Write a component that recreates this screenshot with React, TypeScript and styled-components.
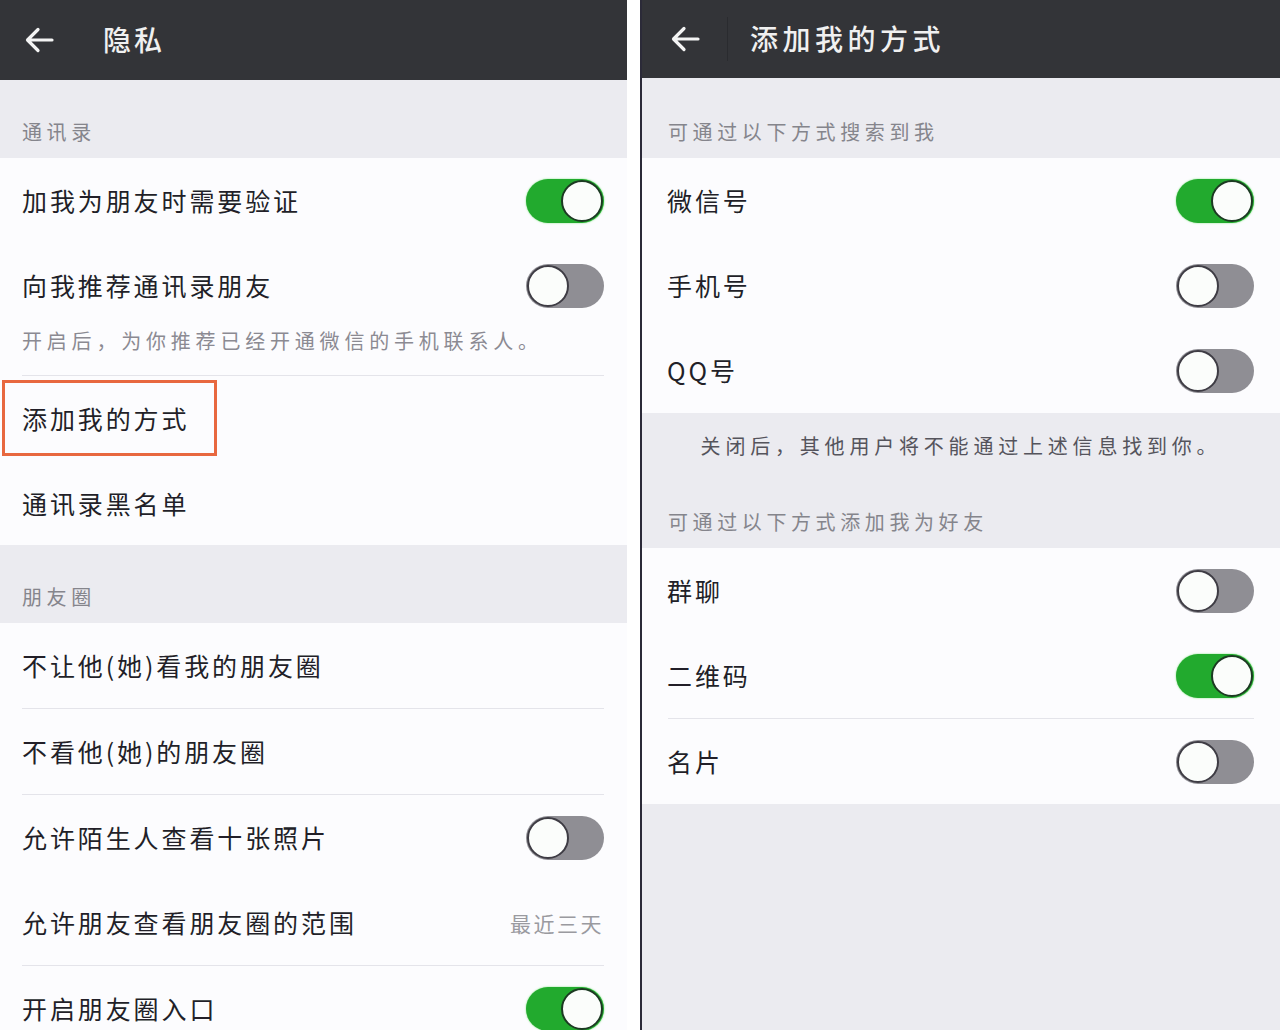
import styled, { createGlobalStyle } from "styled-components";

const GlobalStyle = createGlobalStyle`
  html, body {
    margin: 0;
    padding: 0;
    background: #ffffff;
  }
  body {
    font-family: "Noto Sans CJK SC", "Noto Sans", "Liberation Sans", sans-serif;
    -webkit-font-smoothing: antialiased;
  }
`;

const Page = styled.div`
  display: flex;
  width: 1280px;
  height: 1030px;
  overflow: hidden;
  background: #ffffff;
`;

const Screen = styled.div<{ $width?: number; $edge?: boolean }>`
  display: flex;
  flex-direction: column;
  width: ${(p) => (p.$width ? `${p.$width}px` : "auto")};
  flex: ${(p) => (p.$width ? "none" : "1")};
  margin-left: ${(p) => (p.$edge ? "13px" : "0")};
  border-left: ${(p) => (p.$edge ? "2px solid #2b2a38" : "none")};
  background: #ebebf0;
  height: 100%;
  overflow: hidden;

  & > * {
    flex-shrink: 0;
  }
`;

const TopBar = styled.div<{ $height: number }>`
  display: flex;
  align-items: center;
  height: ${(p) => p.$height}px;
  background: #333438;
  color: #f2f2f2;
`;

const BackButton = styled.div<{ $left: number; $divider?: boolean }>`
  display: flex;
  align-items: center;
  justify-content: center;
  height: 44px;
  padding-left: ${(p) => p.$left}px;
  padding-right: ${(p) => (p.$divider ? "27px" : "0")};
  border-right: ${(p) => (p.$divider ? "1px solid #2a2b2f" : "none")};
`;

const Title = styled.div<{ $left: number; $spacing: number }>`
  margin-left: ${(p) => p.$left}px;
  font-size: 28px;
  font-weight: 500;
  letter-spacing: ${(p) => p.$spacing}px;
  color: #f0f0f0;
  line-height: 1;
  padding-bottom: 2px;
`;

const SectionTitle = styled.div<{ $height: number; $pad: number }>`
  display: flex;
  align-items: flex-end;
  height: ${(p) => p.$height}px;
  padding: 0 ${(p) => p.$pad}px 12px;
  box-sizing: border-box;
  font-size: 20px;
  letter-spacing: 4.6px;
  color: #85858c;
  background: #ebebf0;
`;

const Group = styled.div`
  background: #fcfcfe;
  display: flex;
  flex-direction: column;

  & > * {
    flex-shrink: 0;
  }
`;

const Row = styled.div<{ $pad: number; $height?: number }>`
  position: relative;
  display: flex;
  align-items: center;
  justify-content: space-between;
  height: ${(p) => p.$height ?? 85}px;
  padding: 0 ${(p) => p.$pad}px 0 ${(p) => p.$pad - 1}px;
  font-size: 25px;
  letter-spacing: 2.9px;
  color: #221f28;
`;

const Label = styled.span`
  line-height: 1;
`;

const Value = styled.span`
  font-size: 21px;
  letter-spacing: 2.5px;
  color: #9a9aa0;
`;

const Divider = styled.div<{ $left: number; $right: number }>`
  height: 1px;
  margin: 0 ${(p) => p.$right}px 0 ${(p) => p.$left}px;
  background: #e4e4ea;
`;

const Description = styled.div<{ $pad: number }>`
  box-sizing: border-box;
  height: 47px;
  padding: 2px ${(p) => p.$pad}px 0;
  font-size: 20px;
  line-height: 22px;
  letter-spacing: 4.8px;
  color: #8b8a92;
`;

const Highlight = styled.div`
  position: absolute;
  left: 2px;
  top: 4px;
  width: 215px;
  height: 76px;
  box-sizing: border-box;
  border: 3px solid #e8683f;
  pointer-events: none;
`;

const Note = styled.div`
  display: flex;
  justify-content: center;
  box-sizing: border-box;
  padding: 18px 0 0;
  height: 60px;
  font-size: 20px;
  letter-spacing: 4.8px;
  color: #55545c;
`;

const Track = styled.div<{ $on: boolean }>`
  position: relative;
  width: 78px;
  height: 44px;
  border-radius: 22px;
  flex: none;
  background: ${(p) => (p.$on ? "#22aa2e" : "#8f8e94")};
  box-shadow: ${(p) => (p.$on ? "0 0 2px #7be07a" : "none")};
`;

const Knob = styled.div<{ $on: boolean }>`
  position: absolute;
  top: 1px;
  left: ${(p) => (p.$on ? "35px" : "1px")};
  width: 38px;
  height: 38px;
  border-radius: 50%;
  background: #fbfdfb;
  border: 2px solid ${(p) => (p.$on ? "#1c3a22" : "#3e3c44")};
`;

const Toggle = ({ on }: { on: boolean }) => (
  <Track $on={on}>
    <Knob $on={on} />
  </Track>
);

const BackArrow = () => (
  <svg width="30" height="26" viewBox="0 0 30 26" fill="none">
    <path
      d="M28 13H4M14 2.5L3.5 13L14 23.5"
      stroke="#f4f4f4"
      strokeWidth="3.2"
      strokeLinecap="round"
      strokeLinejoin="round"
    />
  </svg>
);

export default function App() {
  return (
    <>
      <GlobalStyle />
      <Page>
        <Screen $width={627}>
          <TopBar $height={80}>
            <BackButton $left={24}>
              <BackArrow />
            </BackButton>
            <Title $left={49} $spacing={3}>隐私</Title>
          </TopBar>

          <SectionTitle $height={78} $pad={22}>通讯录</SectionTitle>
          <Group>
            <Row $pad={23}>
              <Label>加我为朋友时需要验证</Label>
              <Toggle on />
            </Row>
            <Row $pad={23}>
              <Label>向我推荐通讯录朋友</Label>
              <Toggle on={false} />
            </Row>
            <Description $pad={22}>开启后，为你推荐已经开通微信的手机联系人。</Description>
            <Divider $left={22} $right={23} />
            <Row $pad={23}>
              <Label>添加我的方式</Label>
              <Highlight />
            </Row>
            <Row $pad={23} $height={84}>
              <Label>通讯录黑名单</Label>
            </Row>
          </Group>

          <SectionTitle $height={78} $pad={22}>朋友圈</SectionTitle>
          <Group>
            <Row $pad={23}>
              <Label>不让他(她)看我的朋友圈</Label>
            </Row>
            <Divider $left={22} $right={23} />
            <Row $pad={23}>
              <Label>不看他(她)的朋友圈</Label>
            </Row>
            <Divider $left={22} $right={23} />
            <Row $pad={23}>
              <Label>允许陌生人查看十张照片</Label>
              <Toggle on={false} />
            </Row>
            <Row $pad={23}>
              <Label>允许朋友查看朋友圈的范围</Label>
              <Value>最近三天</Value>
            </Row>
            <Divider $left={22} $right={23} />
            <Row $pad={23}>
              <Label>开启朋友圈入口</Label>
              <Toggle on />
            </Row>
          </Group>
        </Screen>

        <Screen $edge>
          <TopBar $height={78}>
            <BackButton $left={28} $divider>
              <BackArrow />
            </BackButton>
            <Title $left={22} $spacing={4.5}>添加我的方式</Title>
          </TopBar>

          <SectionTitle $height={80} $pad={26}>可通过以下方式搜索到我</SectionTitle>
          <Group>
            <Row $pad={26}>
              <Label>微信号</Label>
              <Toggle on />
            </Row>
            <Row $pad={26}>
              <Label>手机号</Label>
              <Toggle on={false} />
            </Row>
            <Row $pad={26}>
              <Label>QQ号</Label>
              <Toggle on={false} />
            </Row>
          </Group>

          <Note>关闭后，其他用户将不能通过上述信息找到你。</Note>
          <SectionTitle $height={75} $pad={26}>可通过以下方式添加我为好友</SectionTitle>
          <Group>
            <Row $pad={26}>
              <Label>群聊</Label>
              <Toggle on={false} />
            </Row>
            <Row $pad={26}>
              <Label>二维码</Label>
              <Toggle on />
            </Row>
            <Divider $left={26} $right={26} />
            <Row $pad={26}>
              <Label>名片</Label>
              <Toggle on={false} />
            </Row>
          </Group>
        </Screen>
      </Page>
    </>
  );
}
